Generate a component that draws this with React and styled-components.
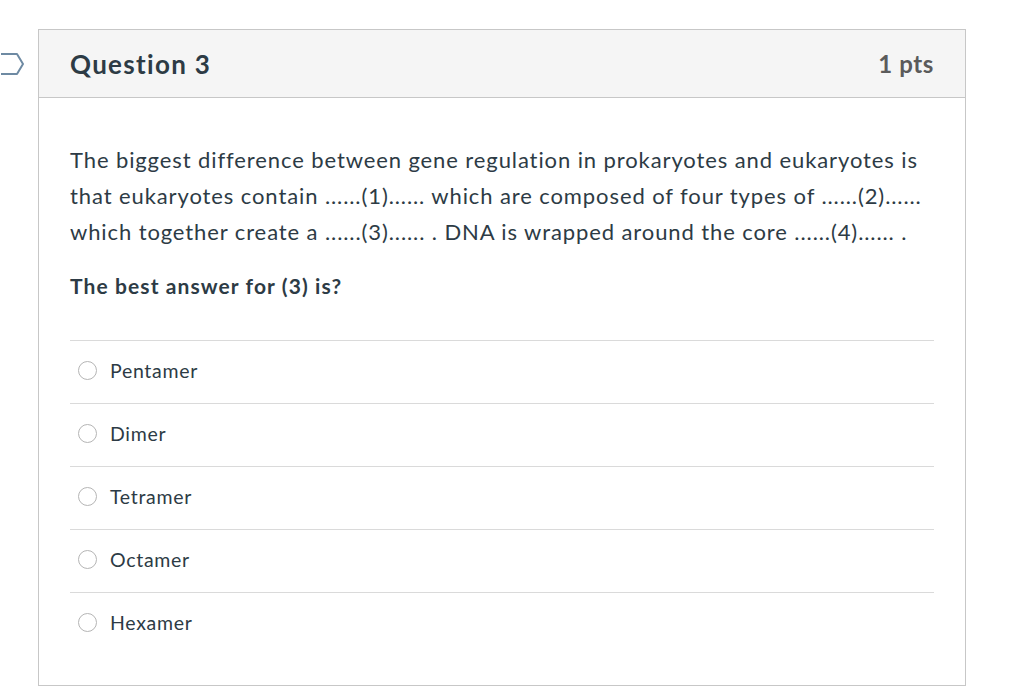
import React from 'react';
import styled, { createGlobalStyle } from 'styled-components';

const GlobalStyle = createGlobalStyle`
  body {
    margin: 0;
    background: #fff;
    font-family: Lato, "Open Sans", sans-serif;
    color: #2d3b45;
  }
`;

const Page = styled.div`
  padding: 29px 0 0 38px;
`;

const Card = styled.div`
  position: relative;
  width: 926px;
  border: 1px solid #c7c7c7;
  background: #fff;
`;

const Bookmark = styled.svg`
  position: absolute;
  left: -39px;
  top: 21px;
`;

const Header = styled.div`
  display: flex;
  align-items: center;
  justify-content: space-between;
  height: 67px;
  padding: 0 31px;
  background: #f5f5f5;
  border-bottom: 1px solid #c7c7c7;
`;

const Title = styled.h2`
  margin: 0;
  font-size: 26px;
  font-weight: 700;
  letter-spacing: 1.3px;
  color: #2d3b45;
`;

const Points = styled.div`
  font-size: 24px;
  font-weight: 700;
  letter-spacing: 0.6px;
  color: #5b5b5b;
`;

const Body = styled.div`
  padding: 44px 31px 30px;
`;

const Text = styled.p`
  margin: 0 0 18px;
  font-size: 22px;
  letter-spacing: 0.9px;
  line-height: 36px;
`;

const Prompt = styled.p`
  margin: 0 0 36px;
  font-size: 21px;
  font-weight: 700;
  letter-spacing: 1.1px;
  line-height: 36px;
`;

const Answers = styled.div`
  display: flex;
  flex-direction: column;
`;

const Answer = styled.label`
  display: flex;
  align-items: center;
  gap: 13px;
  height: 59px;
  padding: 0 0 3px 8px;
  border-top: 1px solid #dadada;
  font-size: 19.5px;
  letter-spacing: 0.7px;
  color: #2d3b45;
`;

const Radio = styled.span`
  width: 19px;
  height: 19px;
  border-radius: 50%;
  border: 1px solid #b5b5b5;
  background: #fff;
  box-sizing: border-box;
`;

const options = ['Pentamer', 'Dimer', 'Tetramer', 'Octamer', 'Hexamer'];

const App = () => {
  return (
    <Page>
      <GlobalStyle />
      <Card>
        <Bookmark width="26" height="26" viewBox="0 0 26 26">
          <path
            d="M1 3 H17 L23 13 L17 23 H1"
            fill="none"
            stroke="#6e8aa3"
            strokeWidth="2"
            strokeLinejoin="round"
          />
        </Bookmark>
        <Header>
          <Title>Question 3</Title>
          <Points>1 pts</Points>
        </Header>
        <Body>
          <Text>
            The biggest difference between gene regulation in prokaryotes and eukaryotes is
            that eukaryotes contain ......(1)...... which are composed of four types of ......(2)......
            which together create a ......(3)...... . DNA is wrapped around the core ......(4)...... .
          </Text>
          <Prompt>The best answer for (3) is?</Prompt>
          <Answers>
            {options.map((o) => (
              <Answer key={o}>
                <Radio />
                {o}
              </Answer>
            ))}
          </Answers>
        </Body>
      </Card>
    </Page>
  );
};

export default App;
